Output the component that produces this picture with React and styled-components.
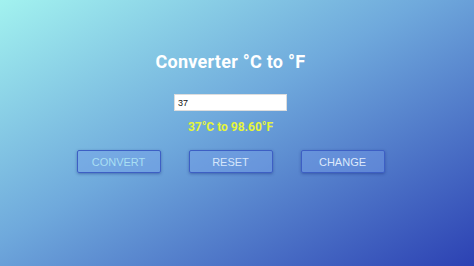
import styled, { createGlobalStyle } from "styled-components";

const Global = createGlobalStyle`
  html, body {
    margin: 0;
    padding: 0;
  }
  body {
    font-family: Roboto, "Liberation Sans", Arial, sans-serif;
  }
`;

const Page = styled.div`
  width: 474px;
  height: 266px;
  background: linear-gradient(to bottom right, #a2f2ef 0%, #6fa9dc 45%, #2c41b3 100%);
  display: flex;
  flex-direction: column;
  align-items: center;
  box-sizing: border-box;
  padding: 51px 13px 0 0;
`;

const Title = styled.h1`
  margin: 0;
  color: #fff;
  font-size: 18px;
  font-weight: 700;
  letter-spacing: 0.25px;
`;

const Input = styled.input`
  margin-top: 22px;
  width: 113px;
  height: 17px;
  box-sizing: border-box;
  border: 1px solid #ddd;
  background: #fff;
  padding: 0 3px;
  font-family: "Liberation Sans", Arial, sans-serif;
  font-size: 9px;
  color: #111;
  outline: none;
`;

const Result = styled.p`
  margin: 9px 0 0;
  color: #e6f53a;
  font-size: 12px;
  font-weight: 700;
`;

const Buttons = styled.div`
  display: flex;
  gap: 28px;
  margin-top: 16px;
`;

const Button = styled.button`
  width: 84px;
  height: 23px;
  border: 1px solid #3d5fc4;
  border-radius: 2px;
  background: rgba(120, 160, 235, 0.4);
  box-shadow: 0 1px 3px rgba(20, 40, 120, 0.45);
  color: ${(p) => p.$tint};
  font-family: "Liberation Sans", Arial, sans-serif;
  font-size: 11px;
  padding: 0;
  cursor: pointer;
`;

export default function App() {
  return (
    <>
      <Global />
      <Page>
        <Title>Converter °C to °F</Title>
        <Input defaultValue="37" />
        <Result>37°C to 98.60°F</Result>
        <Buttons>
          <Button $tint="#a9dff3">CONVERT</Button>
          <Button $tint="#d5e6fb">RESET</Button>
          <Button $tint="#dde9fb">CHANGE</Button>
        </Buttons>
      </Page>
    </>
  );
}
